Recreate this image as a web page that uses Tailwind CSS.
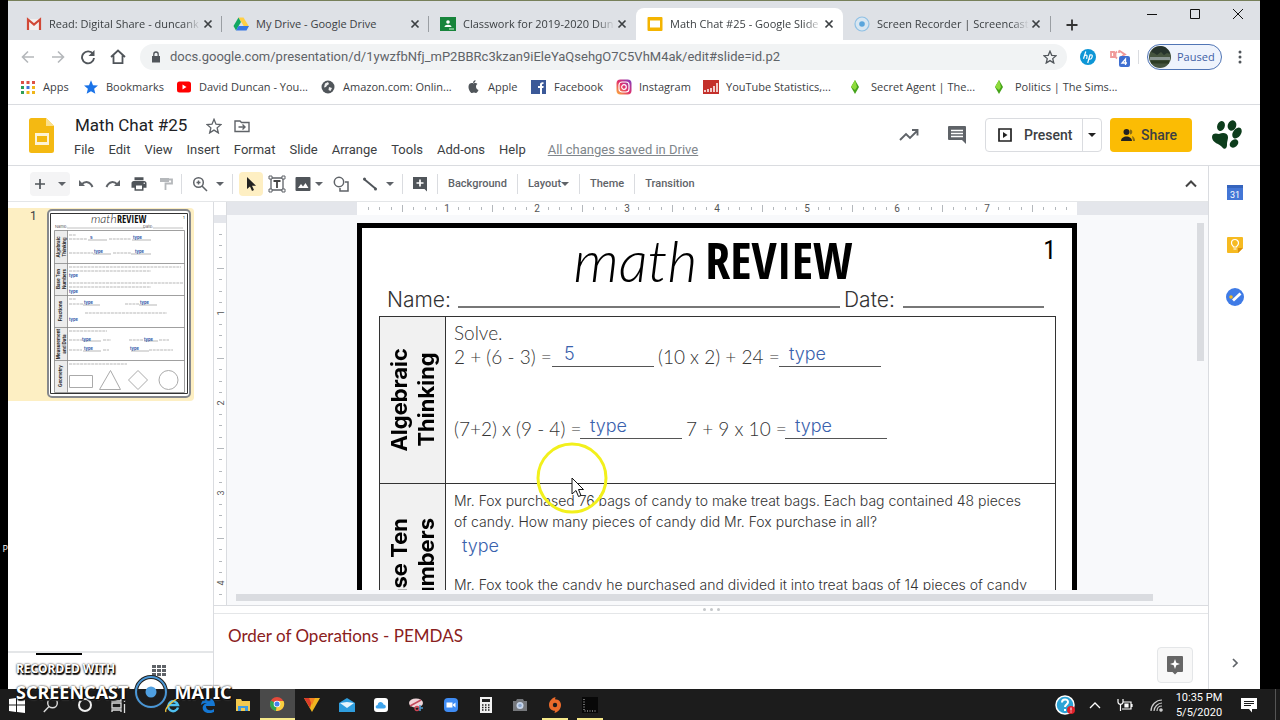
<!DOCTYPE html>
<html lang="en">
<head>
    <meta charset="UTF-8">
    <meta name="viewport" content="width=device-width, initial-scale=1.0">
    <title>Math Chat #25 - Google Slides</title>
    <script src="https://cdn.jsdelivr.net/npm/@tailwindcss/browser@4"></script>
</head>
<body class="relative flex h-screen flex-col overflow-hidden bg-black font-['Open_Sans','Noto_Sans',sans-serif] text-[#3c4043]">

    <div class="flex min-h-0 flex-1">
        <!-- left screen edge -->
        <div class="flex w-2 shrink-0 items-end justify-end overflow-hidden pb-[134px] text-[9px] leading-3 text-white">P</div>

        <div class="flex min-w-0 flex-1 flex-col bg-white">

            <!-- Tab strip -->
            <div class="flex h-10 shrink-0 items-end border-t border-[#77805a] bg-[#dee1e6] pl-[7px] text-[11px]">
                <div class="flex h-8 w-[207px] items-center pl-[11px]">
                    <svg class="h-4 w-4 shrink-0" viewBox="0 0 16 16"><path d="M2 3h12v11H2z" fill="#f3efef"/><path d="M2 14V3.5l6 5 6-5V14" fill="none" stroke="#d14836" stroke-width="2.2"/></svg>
                    <span class="ml-[7px] w-[152px] whitespace-nowrap [mask-image:linear-gradient(to_right,black_88%,transparent)]">Read: Digital Share - duncank</span>
                    <button class="ml-px" aria-label="Close tab"><svg class="h-3 w-3" viewBox="0 0 12 12"><path d="M2.5 2.5l7 7M9.5 2.5l-7 7" stroke="#3c4043" stroke-width="1.7"/></svg></button>
                    <div class="ml-auto h-4 w-px bg-[#9a9ea3]"></div>
                </div>
                <div class="flex h-8 w-[207px] items-center pl-[11px]">
                    <svg class="h-4 w-4 shrink-0" viewBox="0 0 16 16"><path d="M5.5 1.5h5L16 10.5h-5z" fill="#ffcf44"/><path d="M5.5 1.5L8 6l-5 8.5L.5 10z" fill="#11a861"/><path d="M5.5 10H16l-2.5 4.5H3z" fill="#3777e3"/></svg>
                    <span class="ml-[7px] w-[152px] whitespace-nowrap">My Drive - Google Drive</span>
                    <button class="ml-px" aria-label="Close tab"><svg class="h-3 w-3" viewBox="0 0 12 12"><path d="M2.5 2.5l7 7M9.5 2.5l-7 7" stroke="#3c4043" stroke-width="1.7"/></svg></button>
                    <div class="ml-auto h-4 w-px bg-[#9a9ea3]"></div>
                </div>
                <div class="flex h-8 w-[207px] items-center pl-[11px]">
                    <svg class="h-4 w-4 shrink-0" viewBox="0 0 16 16"><path d="M0 1h16v14H0z" fill="#17843b"/><circle cx="8" cy="6" r="1.8" fill="#fff"/><path d="M4.5 11c0-3 7-3 7 0z" fill="#fff"/><path d="M9 13h5" stroke="#8fd0a0" stroke-width="1.5"/></svg>
                    <span class="ml-[7px] w-[152px] whitespace-nowrap [mask-image:linear-gradient(to_right,black_88%,transparent)]">Classwork for 2019-2020 Dun</span>
                    <button class="ml-px" aria-label="Close tab"><svg class="h-3 w-3" viewBox="0 0 12 12"><path d="M2.5 2.5l7 7M9.5 2.5l-7 7" stroke="#3c4043" stroke-width="1.7"/></svg></button>
                </div>
                <div class="flex h-8 w-[207px] items-center rounded-t-lg bg-white pl-[11px]">
                    <svg class="h-4 w-4 shrink-0" viewBox="0 0 16 16"><rect x=".5" y="1" width="15" height="14" rx="1" fill="#f4b400"/><path d="M3 4.5h10v7H3z" fill="#fff"/></svg>
                    <span class="ml-[7px] w-[152px] whitespace-nowrap [mask-image:linear-gradient(to_right,black_88%,transparent)]">Math Chat #25 - Google Slide</span>
                    <button class="ml-px" aria-label="Close tab"><svg class="h-3 w-3" viewBox="0 0 12 12"><path d="M2.5 2.5l7 7M9.5 2.5l-7 7" stroke="#3c4043" stroke-width="1.7"/></svg></button>
                </div>
                <div class="flex h-8 w-[207px] items-center pl-[11px]">
                    <svg class="h-4 w-4 shrink-0" viewBox="0 0 16 16"><circle cx="8" cy="8" r="7" fill="#d8e6f1" stroke="#8fc0e4" stroke-width="1.2"/><circle cx="8" cy="8" r="2.8" fill="#5aa5dc"/></svg>
                    <span class="ml-[7px] w-[152px] whitespace-nowrap [mask-image:linear-gradient(to_right,black_88%,transparent)]">Screen Recorder | Screencast</span>
                    <button class="ml-px" aria-label="Close tab"><svg class="h-3 w-3" viewBox="0 0 12 12"><path d="M2.5 2.5l7 7M9.5 2.5l-7 7" stroke="#3c4043" stroke-width="1.7"/></svg></button>
                </div>
                <div class="mb-2 h-4 w-px bg-[#9a9ea3]"></div>
                <button class="mb-2 ml-3.5" aria-label="New tab"><svg class="h-3.5 w-3.5" viewBox="0 0 14 14"><path d="M7 1.5v11M1.500 7h11" stroke="#333" stroke-width="1.8"/></svg></button>
                <div class="mr-4 mb-5 ml-auto flex gap-[31px]">
                    <button aria-label="Minimize"><svg class="h-3 w-3" viewBox="0 0 12 12"><path d="M1 6.500h10" stroke="#111"/></svg></button>
                    <button aria-label="Maximize"><svg class="h-3 w-3" viewBox="0 0 12 12"><path d="M1.500 1.500h9v9h-9z" fill="none" stroke="#111"/></svg></button>
                    <button aria-label="Close"><svg class="h-3 w-3" viewBox="0 0 12 12"><path d="M1 1l10 10M11 1L1 11" stroke="#111"/></svg></button>
                </div>
            </div>

            <!-- Address bar -->
            <div class="flex h-[34px] shrink-0 items-center pl-3">
                <button class="mr-3.5" aria-label="Back"><svg class="h-4 w-4" viewBox="0 0 16 16"><path d="M14 8H2.500M8 2.500L2.500 8 8 13.500" fill="none" stroke="#b5b8bb" stroke-width="1.6"/></svg></button>
                <button class="mr-3.5" aria-label="Forward"><svg class="h-4 w-4" viewBox="0 0 16 16"><path d="M2 8h11.500M8 2.500L13.500 8 8 13.500" fill="none" stroke="#b5b8bb" stroke-width="1.6"/></svg></button>
                <button class="mr-3.5" aria-label="Reload"><svg class="h-4 w-4" viewBox="0 0 16 16"><path d="M13 5A6 6 0 1 0 14 9" fill="none" stroke="#50555a" stroke-width="1.9"/><path d="M14.500 1v6h-6z" fill="#50555a"/></svg></button>
                <button class="mr-3.5" aria-label="Home"><svg class="h-4 w-4" viewBox="0 0 16 16"><path d="M1 8l7-6.500L15 8M3.500 6.500v7.700h9V6.500" fill="none" stroke="#50555a" stroke-width="1.8"/></svg></button>
                <div class="flex h-[26px] min-w-0 flex-1 items-center rounded-full bg-[#f1f3f4] pr-2.5 pl-2.5">
                    <svg class="h-3 w-3" viewBox="0 0 12 12"><path d="M2 5h8v6.500H2z" fill="#50555a"/><path d="M3.800 5V3.200a2.200 2.200 0 0 1 4.400 0V5" fill="none" stroke="#50555a" stroke-width="1.3"/></svg>
                    <input type="text" aria-label="Address" value="docs.google.com/presentation/d/1ywzfbNfj_mP2BBRc3kzan9iEleYaQsehgO7C5VhM4ak/edit#slide=id.p2" class="ml-2 min-w-0 flex-1 bg-transparent font-[Roboto,sans-serif] text-[13px] text-[#5f6368] outline-none">
                    <button aria-label="Bookmark this page"><svg class="h-3.5 w-3.5" viewBox="0 0 24 24"><path d="M12 2l3 7.200 7.500.6-5.800 5 1.800 7.500L12 18.200l-6.500 4.100 1.800-7.500-5.800-5 7.500-.6z" fill="none" stroke="#50555a" stroke-width="2.2"/></svg></button>
                </div>
                <button class="ml-[13px]" aria-label="HP extension"><svg class="h-4 w-4" viewBox="0 0 16 16"><circle cx="8" cy="8" r="8" fill="#0d96d6"/><path d="M5.800 2.500L3.500 9.800M4.700 6.500c2.500-1.200 2.800.2 1.900 3.300M10 6l-2.300 8M9.500 6c3.200-.5 3.200.3 2.300 2.800-.3 1-.7 1.500-2.700 1.300" fill="none" stroke="#fff" stroke-width="1.2"/></svg></button>
                <button class="ml-3.5 flex" aria-label="Recorder extension"><svg class="h-5 w-5" viewBox="0 0 20 20"><path d="M1 5h3v5H1zM7 4.500L5.500 6v4L7 11.500M9 3.500l6 4-3 1.500M9 3.500V6" fill="none" stroke="#f09a9a" stroke-width="1.8"/><rect x="9" y="9" width="11" height="11" rx="2" fill="#3f6fd1"/><path d="M15.500 18v-6L12 16h5" fill="none" stroke="#fff" stroke-width="1.3"/></svg></button>
                <div class="ml-2 h-3.5 w-px bg-[#dadce0]"></div>
                <button class="ml-2 flex h-[26px] w-[75px] items-center rounded-full border border-[#5075b5] bg-[#eef3fc] pl-px text-[11px] text-[#3f60a5]">
                    <svg class="mr-1.5 h-[22px] w-[22px] shrink-0" viewBox="0 0 22 22"><circle cx="11" cy="11" r="11" fill="#45543f"/><path d="M2 6l2-3 3-2 5-1 4 1 4 4 1 3-3-1-3 2-3-3-4 3-3-2z" fill="#26332c"/><path d="M1 11h20v3H1z" fill="#8a9693"/><path d="M2 16h18" stroke="#2c3b24" stroke-width="3"/></svg>
                    Paused
                </button>
                <button class="mr-3 ml-2.5" aria-label="Menu"><svg class="h-4 w-4" viewBox="0 0 16 16" fill="#50555a"><circle cx="8" cy="3" r="1.5"/><circle cx="8" cy="8" r="1.5"/><circle cx="8" cy="13" r="1.5"/></svg></button>
            </div>

            <!-- Bookmarks bar -->
            <div class="flex h-[31px] shrink-0 items-center border-b border-[#dadce0] pb-1 pl-3 text-[11px] whitespace-nowrap">
                <a href="#" class="flex w-[63px] shrink-0 items-center gap-[7px]"><svg class="h-4 w-4" viewBox="0 0 16 16"><path d="M1 2h3v3H1zM6.500 2h3v3h-3zM12 2h3v3h-3z" fill="#dd5246"/><path d="M1 7h3v3H1z" fill="#2f9e58"/><path d="M6.500 7h3v3h-3z" fill="#4173d8"/><path d="M12 7h3v3h-3z" fill="#f0b61a"/><path d="M1 12h3v3H1z" fill="#2f9e58"/><path d="M6.500 12h3v3h-3zM12 12h3v3h-3z" fill="#f0b61a"/></svg>Apps</a>
                <a href="#" class="flex w-[93px] shrink-0 items-center gap-[7px]"><svg class="h-4 w-4" viewBox="0 0 24 24"><path d="M12 2l3 7.200 7.500.6-5.800 5 1.800 7.500L12 18.200l-6.500 4.100 1.800-7.500-5.800-5 7.500-.6z" fill="#1a73e8"/></svg>Bookmarks</a>
                <a href="#" class="flex w-[144px] shrink-0 items-center gap-[7px]"><svg class="h-4 w-4" viewBox="0 0 16 16"><rect x="1" y="2.500" width="14" height="11" rx="2.500" fill="#f00"/><path d="M6.500 5.500v5l4-2.500z" fill="#fff"/></svg>David Duncan - You...</a>
                <a href="#" class="flex w-[145px] shrink-0 items-center gap-[7px]"><svg class="h-4 w-4" viewBox="0 0 16 16"><circle cx="8" cy="8" r="6.500" fill="#50555a"/><path d="M5 4.500l3-1.500 1 2-2 1.500-1 1.500-2 .5M9 8l3 1-1.500 3L8.500 11z" fill="#eee"/></svg>Amazon.com: Onlin...</a>
                <a href="#" class="flex w-[66px] shrink-0 items-center gap-[7px]"><svg class="h-4 w-4" viewBox="0 0 16 16" fill="#50555a"><path d="M11 7.500c0-1.500 1-2.200 1.500-2.500-1-1.300-2.500-1.300-4-.6-1.500-.8-5-.6-5 3.300 0 3 2 6.300 3.500 6.300.8 0 1.200-.5 2-.5s1.200.5 2 .5 2-1.700 2.500-3C12 10.500 11 9.500 11 7.500zM8 4c0-1.500 1-2.700 2.500-3C10.600 2.700 9.500 4 8 4z"/></svg>Apple</a>
                <a href="#" class="flex w-[85px] shrink-0 items-center gap-[7px]"><svg class="h-4 w-4" viewBox="0 0 16 16"><path d="M0 1h15v14H0z" fill="#3b5998"/><path d="M9 15V9H7V7h2V5.500C9 4 10 3 12.500 3.300V5c-1.500 0-1.500.3-1.500 2h1.700l-.3 2H11v6z" fill="#fff"/></svg>Facebook</a>
                <a href="#" class="flex w-[87px] shrink-0 items-center gap-[7px]"><svg class="h-4 w-4" viewBox="0 0 16 16"><defs><linearGradient id="ig" x1="0" y1="1" x2="1" y2="0"><stop offset="0" stop-color="#fdb63b"/><stop offset=".5" stop-color="#e1306c"/><stop offset="1" stop-color="#7a3fc4"/></linearGradient></defs><rect x=".5" y=".5" width="15" height="15" rx="4" fill="url(#ig)"/><rect x="3" y="3" width="10" height="10" rx="3" fill="none" stroke="#fff" stroke-width="1.2"/><circle cx="8" cy="8" r="2.300" fill="none" stroke="#fff" stroke-width="1.2"/></svg>Instagram</a>
                <a href="#" class="flex w-[145px] shrink-0 items-center gap-[7px]"><svg class="h-4 w-4" viewBox="0 0 16 16"><path d="M0 1h16v14H0z" fill="#c4302b"/><path d="M2 11v2M5 10v3M8 9v4M11 7v6M14 4v9" stroke="#fff" stroke-width="1.5"/></svg>YouTube Statistics,...</a>
                <a href="#" class="flex w-[144px] shrink-0 items-center gap-[7px]"><svg class="h-4 w-4" viewBox="0 0 16 16"><path d="M7 1l4 7-4 7-4-7z" fill="#45a31a"/><path d="M7 1l2 7-2 3-4-3z" fill="#8edb3c"/></svg>Secret Agent | The...</a>
                <a href="#" class="flex shrink-0 items-center gap-[7px]"><svg class="h-4 w-4" viewBox="0 0 16 16"><path d="M7 1l4 7-4 7-4-7z" fill="#45a31a"/><path d="M7 1l2 7-2 3-4-3z" fill="#8edb3c"/></svg>Politics | The Sims...</a>
            </div>

            <!-- Document header -->
            <div class="flex h-[61px] shrink-0 items-center border-b border-[#dadce0] font-[Roboto,sans-serif]">
                <svg class="ml-[21px] h-[35px] w-[26px] shrink-0" viewBox="0 0 26 35"><path d="M2.500 0H17l8 8v24.500a2.500 2.500 0 0 1-2.500 2.500h-20A2.500 2.500 0 0 1 0 32.500v-30A2.500 2.500 0 0 1 2.500 0z" fill="#f4b912"/><path d="M17 0l8 8h-8z" fill="#fbe08d"/><path d="M6 15h14v12H6z" fill="#fdf3d6"/><path d="M8 18h10v6H8z" fill="#f4b912"/></svg>
                <div class="ml-[19px] pt-1.5">
                    <div class="flex h-6 items-center">
                        <input type="text" aria-label="Document title" value="Math Chat #25" class="w-[122px] bg-transparent pl-px text-[17px] text-[#202124] outline-none">
                        <button class="ml-2.5" aria-label="Star"><svg class="h-4 w-4" viewBox="0 0 24 24"><path d="M12 2l3 7.200 7.500.6-5.800 5 1.800 7.500L12 18.200l-6.500 4.100 1.800-7.500-5.800-5 7.500-.6z" fill="none" stroke="#5f6368" stroke-width="2"/></svg></button>
                        <button class="ml-3" aria-label="Move to folder"><svg class="h-4 w-4" viewBox="0 0 16 16"><path d="M1 3h5l1.500 1.500H15V13.500H1z" fill="none" stroke="#5f6368" stroke-width="1.4"/><path d="M4.500 9h6M8.500 6.500L11 9l-2.500 2.500" fill="none" stroke="#5f6368" stroke-width="1.4"/></svg></button>
                    </div>
                    <div class="flex h-6 items-center gap-3.5 text-[13px] whitespace-nowrap text-[#3c4043]">
                        <button>File</button>
                        <button>Edit</button>
                        <button>View</button>
                        <button>Insert</button>
                        <button>Format</button>
                        <button>Slide</button>
                        <button>Arrange</button>
                        <button>Tools</button>
                        <button>Add-ons</button>
                        <button>Help</button>
                        <a href="#" class="ml-2 text-[#80868b] underline">All changes saved in Drive</a>
                    </div>
                </div>
                <div class="mr-[18px] ml-auto flex items-center font-medium">
                    <button class="mr-7" aria-label="Activity"><svg class="h-5 w-5" viewBox="0 0 20 20"><path d="M1 15l6-6 4 4 7-7M13 5h5.500v5.500" fill="none" stroke="#5f6368" stroke-width="1.9"/></svg></button>
                    <button class="mr-[18px]" aria-label="Comments"><svg class="h-5 w-5" viewBox="0 0 20 20"><path d="M2 1h16a1 1 0 0 1 1 1v17l-4-4H2a1 1 0 0 1-1-1V2a1 1 0 0 1 1-1z" fill="#5f6368"/><path d="M4 5.500h12M4 8.500h12M4 11.500h12" stroke="#fff" stroke-width="1.5"/></svg></button>
                    <div class="flex h-[34px] rounded border border-[#dadce0] text-sm text-[#3c4043]">
                        <button class="flex w-24 items-center gap-3 pl-3"><svg class="h-3.5 w-3.5" viewBox="0 0 14 14"><path d="M1 1h12v12H1z" fill="none" stroke="#222" stroke-width="1.7"/><path d="M5 4v6l4.500-3z" fill="#222"/></svg>Present</button>
                        <button class="flex w-[19px] items-center justify-center border-l border-[#dadce0]" aria-label="Present options"><svg class="h-2 w-2" viewBox="0 0 8 8"><path d="M0 2h8L4 6z" fill="#222"/></svg></button>
                    </div>
                    <button class="ml-2 flex h-[34px] w-[82px] items-center gap-1.5 rounded bg-[#fbbc04] pl-[11px] text-sm"><svg class="h-3.5 w-3.5" viewBox="0 0 14 14"><circle cx="5.500" cy="4" r="3" fill="#222"/><path d="M0 13c0-6 11-6 11 0z" fill="#222"/><path d="M9 1.500c3 0 3 5 0 5M11 8c2 1 3 2.500 3 5h-2" fill="#8a6c14"/></svg>Share</button>
                    <svg class="ml-5 h-[30px] w-[30px]" viewBox="0 0 30 30" fill="#0d3d1c"><path d="M0 17c0-4 4-4 7-3 4-2 9-1 9 3 0 3-1 4-1 8 0 4-3 5-5 2-2-3-10-4-10-10z"/><ellipse cx="9" cy="6" rx="3.800" ry="5" transform="rotate(20 9 6)"/><ellipse cx="20" cy="5.500" rx="4.200" ry="5.300" transform="rotate(20 20 5.500)"/><ellipse cx="25" cy="13" rx="4" ry="6" transform="rotate(35 25 13)"/><ellipse cx="22" cy="23.500" rx="3.600" ry="4.800" transform="rotate(50 22 23.500)"/></svg>
                </div>
            </div>

            <div class="flex min-h-0 flex-1">
                <div class="flex min-w-0 flex-1 flex-col">

                    <!-- Toolbar -->
                    <div class="flex h-9 shrink-0 items-center border-b border-[#e4e6e8] pr-[10px] pl-[22px] font-[Roboto,sans-serif] text-[11px] font-medium text-[#5f6368]">
                        <button class="flex h-6 w-10 items-center justify-center gap-3 rounded bg-[#f4f4f5]" aria-label="New slide"><svg class="h-3 w-3" viewBox="0 0 12 12"><path d="M6 1v10M1 6h10" stroke="#50555a" stroke-width="1.7"/></svg><svg class="h-2 w-2" viewBox="0 0 8 8"><path d="M0 2h8L4 6z" fill="#5f6368"/></svg></button>
                        <button class="ml-0.5 flex w-[27px] justify-center" aria-label="Undo"><svg class="h-4 w-4" viewBox="0 0 16 16"><path d="M1 4v6h6z" fill="#5f6368"/><path d="M3.500 8.500C7 5 12 5 14.500 11" fill="none" stroke="#5f6368" stroke-width="2"/></svg></button>
                        <button class="flex w-[27px] justify-center" aria-label="Redo"><svg class="h-4 w-4" viewBox="0 0 16 16"><path d="M15 4v6H9z" fill="#5f6368"/><path d="M12.500 8.500C9 5 4 5 1.500 11" fill="none" stroke="#5f6368" stroke-width="2"/></svg></button>
                        <button class="flex w-[26px] justify-center" aria-label="Print"><svg class="h-[18px] w-[18px]" viewBox="0 0 24 24" fill="#50555a"><path d="M19 8H5c-1.660 0-3 1.340-3 3v6h4v4h12v-4h4v-6c0-1.660-1.340-3-3-3zm-3 11H8v-5h8v5zm3-7c-.55 0-1-.45-1-1s.45-1 1-1 1 .45 1 1-.45 1-1 1zm-1-9H6v4h12V3z"/></svg></button>
                        <button class="flex w-[27px] justify-center" aria-label="Paint format"><svg class="h-4 w-4" viewBox="0 0 16 16"><path d="M2 2h9v4H2z" fill="#b5b8bb"/><path d="M11 3.500h3v4H7.500V14" fill="none" stroke="#b5b8bb" stroke-width="1.8"/></svg></button>
                        <div class="mx-0.5 h-5 w-px bg-[#dadce0]"></div>
                        <button class="flex w-12 items-center justify-center gap-2" aria-label="Zoom"><svg class="h-4 w-4" viewBox="0 0 16 16"><circle cx="6.500" cy="6.500" r="4.800" fill="none" stroke="#5f6368" stroke-width="1.5"/><path d="M10 10l5 5M6.500 4.500v4M4.500 6.500h4" stroke="#5f6368" stroke-width="1.5"/></svg><svg class="h-2 w-2" viewBox="0 0 8 8"><path d="M0 2h8L4 6z" fill="#5f6368"/></svg></button>
                        <div class="h-5 w-px bg-[#dadce0]"></div>
                        <button class="ml-1.5 flex h-6 w-6 items-center justify-center rounded-sm bg-[#feefc3]" aria-label="Select"><svg class="h-4 w-4" viewBox="0 0 16 16"><path d="M4 1v12l3-2.500L9 15l2-1-2-4.300h4z" fill="#222"/></svg></button>
                        <button class="flex w-7 justify-center" aria-label="Text box"><svg class="h-[18px] w-[18px]" viewBox="0 0 18 18"><path d="M3 3h12v12H3z" fill="none" stroke="#5f6368" stroke-width="1.3"/><path d="M1 1h3v3H1zM14 1h3v3h-3zM1 14h3v3H1zM14 14h3v3h-3z" fill="#fff" stroke="#5f6368"/><path d="M5.500 6h7M9 6v7" stroke="#444" stroke-width="1.8"/></svg></button>
                        <button class="flex w-9 items-center justify-center gap-1" aria-label="Insert image"><svg class="h-4 w-4" viewBox="0 0 16 16"><rect x=".5" y="1" width="15" height="14" rx="1" fill="#50555a"/><path d="M3 12l3-4 2 2.500L10.500 7l3 5z" fill="#fff"/></svg><svg class="h-2 w-2" viewBox="0 0 8 8"><path d="M0 2h8L4 6z" fill="#5f6368"/></svg></button>
                        <button class="flex w-7 justify-center" aria-label="Shape"><svg class="h-4 w-4" viewBox="0 0 16 16" fill="none" stroke="#5f6368" stroke-width="1.5"><circle cx="6" cy="6" r="4.700"/><path d="M12 6h3v9H7v-3"/></svg></button>
                        <button class="flex w-[45px] items-center justify-center gap-2" aria-label="Line"><svg class="h-4 w-4" viewBox="0 0 16 16"><path d="M2 3l12 10" stroke="#50555a" stroke-width="1.9"/><circle cx="2.500" cy="3" r="1.5" fill="#50555a"/><circle cx="13.500" cy="13" r="1.5" fill="#50555a"/></svg><svg class="h-2 w-2" viewBox="0 0 8 8"><path d="M0 2h8L4 6z" fill="#5f6368"/></svg></button>
                        <div class="mx-0.5 h-5 w-px bg-[#dadce0]"></div>
                        <button class="flex w-[30px] justify-center" aria-label="Add comment"><svg class="h-4 w-4" viewBox="0 0 16 16"><path d="M1 1h14v14.500L12.500 13H1z" fill="#50555a"/><path d="M8 3.500v7M4.500 7h7" stroke="#fff" stroke-width="1.7"/></svg></button>
                        <div class="ml-0.5 h-5 w-px bg-[#dadce0]"></div>
                        <button class="px-2.5 leading-5">Background</button>
                        <div class="h-5 w-px bg-[#dadce0]"></div>
                        <button class="flex items-center px-2.5 leading-5">Layout<svg class="h-2 w-2" viewBox="0 0 8 8"><path d="M0 2h8L4 6z" fill="#5f6368"/></svg></button>
                        <div class="h-5 w-px bg-[#dadce0]"></div>
                        <button class="px-2.5 leading-5">Theme</button>
                        <div class="h-5 w-px bg-[#dadce0]"></div>
                        <button class="px-2.5 leading-5">Transition</button>
                        <button class="ml-auto" aria-label="Hide the menus"><svg class="h-3.5 w-3.5" viewBox="0 0 14 14"><path d="M2 9.500l5-5 5 5" fill="none" stroke="#444" stroke-width="2"/></svg></button>
                    </div>

                    <div class="flex min-h-0 flex-1">

                        <!-- Filmstrip -->
                        <div class="flex w-[206px] shrink-0 flex-col border-r border-[#dadce0]">
                            <div class="mt-1.5 flex h-[193px] w-[186px] rounded-r bg-[#fdefc3]">
                                <span class="w-[39px] pl-[22px] font-[Roboto,sans-serif] text-xs leading-4">1</span>
                                <svg class="mt-px h-[190px] w-36 shrink-0" viewBox="0 0 144 190" fill="none" font-family="Inter, sans-serif">
                                    <rect x="1" y="1" width="142" height="187" rx="4" fill="#fff" stroke="#86888c" stroke-width="2"/>
                                    <path d="M3.500 4.500h137v180h-137z" stroke="#333"/>
                                    <text x="44" y="14" font-family="Lato" font-style="italic" font-weight="300" font-size="12" fill="#222">math</text>
                                    <text x="70" y="14" font-size="10" font-weight="700" fill="#111" font-family="Open Sans Condensed, Roboto Condensed, Liberation Sans">REVIEW</text>
                                    <text x="136" y="10" font-size="4" fill="#222">1</text>
                                    <path d="M20 19h78M106 19h30" stroke="#999" stroke-width=".6"/>
                                    <g font-size="4" fill="#555"><text x="8" y="19">Name:</text><text x="96" y="19">Date:</text></g>
                                    <path d="M7.500 21.500h13v162h-13z" fill="#ececec"/>
                                    <path d="M7.500 21.500h130v162h-130zM20.500 21v163M7.500 54.500h130M7.500 86.500h130M7.500 118.500h130M7.500 151.500h130" stroke="#888" stroke-width=".8"/>
                                    <g font-size="4.500" font-weight="700" fill="#222" text-anchor="middle">
                                        <text transform="translate(13 38) rotate(-90)">Algebraic</text><text transform="translate(18.500 38) rotate(-90)">Thinking</text>
                                        <text transform="translate(13 70) rotate(-90)">Base Ten</text><text transform="translate(18.500 70) rotate(-90)">Numbers</text>
                                        <text transform="translate(15 102) rotate(-90)">Fractions</text>
                                        <text transform="translate(13 135) rotate(-90)">Measurement</text><text transform="translate(18.500 135) rotate(-90)">and Data</text>
                                        <text transform="translate(15 167) rotate(-90)">Geometry</text>
                                    </g>
                                    <path d="M22 26h7M22 30h18M62 30h22M22 44h24M66 44h18M22 58h112M22 62h82M22 74h114M22 78h82M22 90h7M22 95h14M78 95h14M38 104h82M22 122h38M22 131h13M56 131h8M82 131h14M112 131h10M22 141h13M56 141h6M102 141h24M22 155h58" stroke="#d0d0d0" stroke-width="1.6" stroke-dasharray="3 .7"/>
                                    <path d="M41 31h19M85 31h19M46 45h18M84 45h20M36 96h17M92 96h18M36 132h18M97 132h14M36 142h18M84 142h18" stroke="#888" stroke-width=".6"/>
                                    <g font-size="4" font-weight="700" fill="#2f56a8">
                                        <text x="43" y="30">5</text><text x="86" y="30">type</text><text x="47" y="44">type</text><text x="88" y="44">type</text>
                                        <text x="22" y="68">type</text><text x="22" y="84">type</text><text x="37" y="95">type</text><text x="93" y="95">type</text>
                                        <text x="22" y="112">type</text><text x="35" y="132">type</text><text x="97" y="132">type</text><text x="37" y="141">type</text><text x="83" y="141">type</text>
                                    </g>
                                    <path d="M22.500 166.500h23v12h-23zM52.500 180.500l11-19 10 19zM81.500 171l9.500-9.500 9.500 9.500-9.500 9.500z" stroke="#aaa"/>
                                    <circle cx="121.500" cy="171" r="9.500" stroke="#aaa"/>
                                </svg>
                            </div>
                            <div class="mt-auto flex h-[38px] items-start border-t-2 border-[#e4e6e8]">
                                <div class="ml-7 h-0.5 w-[46px] bg-black"></div>
                                <button class="mt-[11px] ml-[70px]" aria-label="Grid view"><svg class="h-3.5 w-3.5" viewBox="0 0 14 14" fill="#5f6368"><path d="M0 1h4v3H0zM5 1h4v3H5zM10 1h4v3h-4zM0 5h4v3H0zM5 5h4v3H5zM10 5h4v3h-4zM0 9h4v3H0zM5 9h4v3H5zM10 9h4v3h-4z"/></svg></button>
                            </div>
                        </div>

                        <div class="flex min-w-0 flex-1 flex-col">
                            <div class="flex min-h-0 flex-1 border-b border-[#dadce0]">

                                <!-- Vertical ruler -->
                                <svg class="h-full w-[13px] shrink-0 border-r border-[#dadce0]" font-family="Roboto" font-size="9" fill="#555" text-anchor="middle">
                                    <defs><pattern id="vticks" x="0" y="21" width="13" height="90" patternUnits="userSpaceOnUse"><path d="M5 11.500h3M5 22.500h3M5 34.500h3M3 45.500h7M5 56.500h3M5 68.500h3M5 79.500h3" stroke="#b4b8bc"/></pattern></defs>
                                    <rect y="13" width="13" height="8" fill="#e4e6eb"/>
                                    <rect y="22" width="13" height="400" fill="url(#vticks)"/>
                                    <text transform="translate(10 111) rotate(-90)">1</text>
                                    <text transform="translate(10 201) rotate(-90)">2</text>
                                    <text transform="translate(10 291) rotate(-90)">3</text>
                                    <text transform="translate(10 381) rotate(-90)">4</text>
                                </svg>

                                <div class="flex min-w-0 flex-1 flex-col bg-[#f8f9fb]">
                                    <!-- Horizontal ruler -->
                                    <div class="flex h-[13px] shrink-0 bg-[#e4e6eb] pl-[130px]">
                                        <svg class="h-[13px] w-[720px] bg-white" viewBox="0 0 720 13" font-family="Roboto" font-size="10" fill="#555" text-anchor="middle">
                                            <defs><pattern id="hticks" width="90" height="13" patternUnits="userSpaceOnUse"><path d="M11.500 5v3M22.500 5v3M34.500 5v3M45.500 3v7M56.500 5v3M68.500 5v3M79.500 5v3" stroke="#b4b8bc"/></pattern></defs>
                                            <rect width="720" height="13" fill="url(#hticks)"/>
                                            <text x="90" y="10">1</text><text x="180" y="10">2</text><text x="270" y="10">3</text><text x="360" y="10">4</text><text x="450" y="10">5</text><text x="540" y="10">6</text><text x="630" y="10">7</text>
                                        </svg>
                                    </div>

                                    <div class="flex min-h-0 flex-1 pt-2 pr-1">
                                        <!-- Slide -->
                                        <div class="ml-[130px] w-[720px] shrink-0 overflow-hidden border-x-[5px] border-t-[5px] border-black bg-white pr-4 pl-[17px] text-[#333]">
                                            <div class="flex h-[60px] items-center pt-1 text-black">
                                                <div class="flex flex-1 items-center justify-center gap-2 pl-1">
                                                    <span class="font-[Lato,sans-serif] text-[58px] leading-none font-light italic">math</span>
                                                    <span class="font-['Open_Sans_Condensed','Roboto_Condensed','Liberation_Sans',sans-serif] text-[50px] leading-none font-bold">REVIEW</span>
                                                </div>
                                                <span class="mb-5 font-['Roboto_Condensed',Roboto,sans-serif] text-[26px] leading-none">1</span>
                                            </div>
                                            <div class="flex h-6 items-end gap-1 pr-3 pl-2 font-[Inter,sans-serif] text-[21px] leading-6 font-light">
                                                <span class="w-[67px]">Name:</span>
                                                <span class="mb-1 flex-1 border-b-2 border-[#777]"></span>
                                                <span class="w-[55px]">Date:</span>
                                                <span class="mb-1 w-[141px] border-b-2 border-[#777]"></span>
                                            </div>
                                            <div class="mt-1 grid grid-cols-[66px_minmax(0,1fr)] border border-[#333] font-[Lato,sans-serif] text-[19px] font-light">
                                                <div class="flex h-[167px] items-center justify-center border-r border-b border-[#333] bg-[#f1f1f1]">
                                                    <div class="rotate-180 text-center font-[Inter,sans-serif] text-[22px] leading-[27px] font-bold text-black [writing-mode:vertical-rl]">Algebraic<br>Thinking</div>
                                                </div>
                                                <div class="border-b border-[#333] pt-1 pl-2">
                                                    <p class="leading-6">Solve.</p>
                                                    <div class="flex h-[22px] items-end gap-1 leading-5">
                                                        <span class="w-[94px] whitespace-nowrap">2 + (6 - 3) =</span>
                                                        <span class="w-[102px] border-b border-[#555] pl-3 font-[Inter,sans-serif] text-lg leading-6 text-[#3a62ad]">5</span>
                                                        <span class="w-[117px] whitespace-nowrap">(10 x 2) + 24 =</span>
                                                        <span class="w-[102px] border-b border-[#555] pl-2.5 font-[Inter,sans-serif] text-lg leading-6 text-[#3a62ad]">type</span>
                                                    </div>
                                                    <div class="mt-[50px] flex h-[22px] items-end gap-1 leading-5">
                                                        <span class="w-[122px] whitespace-nowrap">(7+2) x (9 - 4) =</span>
                                                        <span class="w-[102px] border-b border-[#555] pl-2.5 font-[Inter,sans-serif] text-lg leading-6 text-[#3a62ad]">type</span>
                                                        <span class="w-[95px] whitespace-nowrap">7 + 9 x 10 =</span>
                                                        <span class="w-[102px] border-b border-[#555] pl-2.5 font-[Inter,sans-serif] text-lg leading-6 text-[#3a62ad]">type</span>
                                                    </div>
                                                </div>
                                                <div class="flex h-[167px] items-center justify-center border-r border-[#333] bg-[#f1f1f1]">
                                                    <div class="rotate-180 text-center font-[Inter,sans-serif] text-[22px] leading-[27px] font-bold text-black [writing-mode:vertical-rl]">Base Ten<br>Numbers</div>
                                                </div>
                                                <div class="pt-1.5 pl-2 font-[Inter,sans-serif] text-sm leading-[21px] whitespace-nowrap">
                                                    <p>Mr. Fox purchased 76 bags of candy to make treat bags. Each bag contained 48 pieces</p>
                                                    <p>of candy. How many pieces of candy did Mr. Fox purchase in all?</p>
                                                    <p class="mt-0.5 pl-2 text-lg leading-6 text-[#3a62ad]">type</p>
                                                    <p class="mt-4">Mr. Fox took the candy he purchased and divided it into treat bags of 14 pieces of candy</p>
                                                </div>
                                            </div>
                                        </div>
                                        <div class="ml-auto h-[138px] w-[7px] bg-[#dadce0]"></div>
                                    </div>

                                    <!-- Horizontal scrollbar -->
                                    <div class="flex h-[15px] shrink-0 items-center bg-[#f8f9fb] pr-[55px] pl-[9px]">
                                        <div class="h-[7px] flex-1 bg-[#dadce0]"></div>
                                    </div>
                                </div>
                            </div>

                            <!-- Splitter and speaker notes -->
                            <div class="flex h-2 shrink-0 items-center justify-center gap-1 border-b border-[#e4e6e8]">
                                <i class="h-[3px] w-[3px] rounded-full bg-[#c4c7ca]"></i>
                                <i class="h-[3px] w-[3px] rounded-full bg-[#c4c7ca]"></i>
                                <i class="h-[3px] w-[3px] rounded-full bg-[#c4c7ca]"></i>
                            </div>
                            <div class="flex h-[75px] shrink-0 items-end pr-[15px] pb-1.5 pl-[14px]">
                                <textarea aria-label="Speaker notes" class="h-[59px] flex-1 resize-none bg-transparent font-[Lato,sans-serif] text-[17px] leading-6 text-[#8a2020] outline-none">Order of Operations - PEMDAS</textarea>
                                <button class="flex h-9 w-9 items-center justify-center rounded-sm border border-[#e4e6e8] bg-[#f8f8f8]" aria-label="Explore"><svg class="h-5 w-5" viewBox="0 0 20 20"><path d="M3 1h14a1 1 0 0 1 1 1v14a1 1 0 0 1-1 1h-4.500L10 19.500 7.500 17H3a1 1 0 0 1-1-1V2a1 1 0 0 1 1-1z" fill="#666"/><path d="M10 4l1.300 3.700L15 9l-3.700 1.300L10 14l-1.300-3.700L5 9l3.700-1.300z" fill="#fff"/></svg></button>
                            </div>
                        </div>
                    </div>
                </div>

                <!-- Side panel -->
                <div class="flex w-[52px] shrink-0 flex-col items-center border-l border-[#dadce0] pt-[18px] pb-[18px]">
                    <button aria-label="Calendar"><svg class="h-[18px] w-[18px]" viewBox="0 0 18 18"><path d="M1 2h16v14H1z" fill="#4376d6"/><path d="M1 1h16v3H1z" fill="#3564bd"/><text x="9" y="14" font-family="Roboto" font-size="9" text-anchor="middle" fill="#fff">31</text></svg></button>
                    <button class="mt-[34px]" aria-label="Keep"><svg class="h-[18px] w-[18px]" viewBox="0 0 18 18"><path d="M2 1h14a1 1 0 0 1 1 1v10l-5 5H2a1 1 0 0 1-1-1V2a1 1 0 0 1 1-1z" fill="#f6ba21"/><path d="M17 12l-5 5v-5z" fill="#dc8f0a"/><path d="M7.500 11c0-1-2-1.500-2-4a3.500 3.500 0 0 1 7 0c0 2.500-2 3-2 4zM7.500 13h3" fill="none" stroke="#fff" stroke-width="1.2"/></svg></button>
                    <button class="mt-[34px]" aria-label="Tasks"><svg class="h-[18px] w-[18px]" viewBox="0 0 18 18"><circle cx="9" cy="9" r="9" fill="#3f7be6"/><path d="M7 12.500l7.500-7" stroke="#fff" stroke-width="2.8"/><circle cx="5" cy="9" r="1.8" fill="#f6ba21"/></svg></button>
                    <button class="mt-auto" aria-label="Hide side panel"><svg class="h-4 w-4" viewBox="0 0 16 16"><path d="M6 4l4 4-4 4" fill="none" stroke="#5f6368" stroke-width="1.7"/></svg></button>
                </div>
            </div>
        </div>
        <div class="w-5 shrink-0"></div>
    </div>

    <!-- Windows taskbar -->
    <div class="flex h-[31px] shrink-0 items-center bg-[#1c1c1c] text-white">
        <div class="flex w-[136px] shrink-0 *:flex *:flex-1 *:justify-center">
            <button aria-label="Start"><svg class="h-4 w-4" viewBox="0 0 16 16" fill="#fff"><path d="M0 2l7-1v6.500H0zM8 .9L16 0v7.500H8zM0 8.500h7V15l-7-1zM8 8.500h8V16l-8-1z"/></svg></button>
            <button aria-label="Search"><svg class="h-4 w-4" viewBox="0 0 16 16" fill="none" stroke="#ddd" stroke-width="1.4"><circle cx="9.500" cy="6" r="4.800"/><path d="M6 9.500L.8 15"/></svg></button>
            <button aria-label="Cortana"><svg class="h-4 w-4" viewBox="0 0 16 16"><circle cx="8" cy="8" r="6" fill="none" stroke="#eee" stroke-width="2"/></svg></button>
            <button aria-label="Task view"><svg class="h-4 w-4" viewBox="0 0 16 16" fill="none" stroke="#ddd" stroke-width="1.3"><path d="M1 2v2h9V2M1 6h9v5H1zM1 15v-2h9v2M13.500 1v4M13.500 7v9"/></svg></button>
        </div>
        <div class="ml-5 flex h-full w-[451px] shrink-0 *:flex *:flex-1 *:items-center *:justify-center">
            <button aria-label="Internet Explorer"><svg class="h-4 w-4" viewBox="0 0 16 16" fill="none"><path d="M13 10.500A5 5 0 1 1 13 8H4" stroke="#4fc0f0" stroke-width="2.4"/><path d="M1 15C-1 12 9 1 15 2" stroke="#f0c43c" stroke-width="1.3"/></svg></button>
            <button aria-label="Edge"><svg class="h-4 w-4" viewBox="0 0 16 16"><path d="M1 8c1-9 14-10 14 1H6c0 5 5 5 8 3v3C8 18 1 15 3 9c1-2 3-3 4-3-3-.5-5 1-6 2z" fill="#1578d4"/></svg></button>
            <button aria-label="File Explorer"><svg class="h-4 w-4" viewBox="0 0 16 16"><path d="M1 2h5l1 2h8v10H1z" fill="#f3c94f"/><path d="M3 9h10v5h-3v-3H6v3H3z" fill="#3f9be0"/></svg></button>
            <button class="border-b-2 border-[#f6e98a] bg-[#4a4a4a]" aria-label="Chrome"><svg class="h-4 w-4" viewBox="0 0 16 16"><circle cx="8" cy="8" r="7" fill="#e5493a"/><path d="M8 8L1.900 4.500A7 7 0 0 0 7 14.900z" fill="#30a551"/><path d="M8 8l-1 6.900A7 7 0 0 0 14.500 5H8z" fill="#f9cf3f"/><circle cx="8" cy="8" r="3.300" fill="#fff"/><circle cx="8" cy="8" r="2.500" fill="#4581ea"/></svg></button>
            <button aria-label="Vectorworks"><svg class="h-4 w-4" viewBox="0 0 16 16"><path d="M0 1h16L8 15z" fill="#f0b51f"/><path d="M0 1h9l-3 10z" fill="#db3b2a"/><path d="M5 1h6L8 8z" fill="#f58220"/></svg></button>
            <button aria-label="Mail"><svg class="h-4 w-4" viewBox="0 0 16 16"><path d="M0 6l8-5 8 5v9H0z" fill="#2f9ddd"/><path d="M1 6l7 5 7-5-7-1z" fill="#e6f5fd"/></svg></button>
            <button aria-label="iCloud"><svg class="h-4 w-4" viewBox="0 0 16 16"><rect x="1" y="1" width="14" height="14" rx="3" fill="#fff"/><path d="M4 11.500c-2-.5-1.500-3.500.7-3.500 0-4 5.300-4 5.800-.5 3 0 3 4 .5 4z" fill="#3fa4ec"/></svg></button>
            <button aria-label="Snipping Tool"><svg class="h-4 w-4" viewBox="0 0 16 16" fill="none"><ellipse cx="8" cy="6" rx="7" ry="4.500" fill="#f0d6da"/><path d="M2 9l11-6" stroke="#c24a5c" stroke-width="1.5"/><circle cx="9" cy="11.500" r="2" stroke="#d04555" stroke-width="1.3"/><path d="M12 8v6M12 11h3" stroke="#4f9bd0" stroke-width="1.5"/></svg></button>
            <button aria-label="Zoom"><svg class="h-4 w-4" viewBox="0 0 16 16"><rect x="1" y="1" width="14" height="14" rx="4" fill="#3f8cf4"/><path d="M3.500 5.500h6v5h-6zM10 7.500l2.500-2v5L10 8.500z" fill="#fff"/></svg></button>
            <button aria-label="Calculator"><svg class="h-4 w-4" viewBox="0 0 16 16"><path d="M2 0h12v16H2z" fill="#f2f2f2"/><path d="M4 2h8v3H4z" fill="#222"/><path d="M4 8h8M4 10.500h8M4 13h8" stroke="#222" stroke-width="1.3" stroke-dasharray="1.500 1.500"/></svg></button>
            <button aria-label="Camera"><svg class="h-4 w-4" viewBox="0 0 16 16"><path d="M1 4h3l1-2h6l1 2h3v10H1z" fill="#75777b"/><circle cx="8" cy="8.500" r="3.500" fill="#c8d6ea"/><circle cx="8" cy="8.500" r="1.8" fill="#8ba5cc"/></svg></button>
            <button class="bg-[linear-gradient(#f6e98a,#f6e98a)] bg-[length:26px_2px] bg-bottom bg-no-repeat" aria-label="Origin"><svg class="h-4 w-4" viewBox="0 0 16 16"><path d="M8.500 0L8 2.200c4 0 6 3 6 5.800 0 4-3 7-6.500 8l.5-2.200C4 13.800 2 11 2 8c0-4 3-7 6.500-8z" fill="#ea6a2b"/><circle cx="8" cy="8" r="2.200" fill="#1c1c1c"/></svg></button>
            <button class="bg-[linear-gradient(#f6e98a,#f6e98a)] bg-[length:26px_2px] bg-bottom bg-no-repeat" aria-label="Screencast-O-Matic"><svg class="h-4 w-4" viewBox="0 0 16 16"><path d="M0 0h16v16H0z" fill="#080808"/><path d="M2 2v12h13" fill="none" stroke="#ccc" stroke-dasharray="1 1.500"/></svg></button>
        </div>
        <div class="ml-auto flex h-full items-center">
            <svg class="mr-3.5 h-5 w-5" viewBox="0 0 20 20"><circle cx="10" cy="10" r="9" fill="#2ba3d6" stroke="#fff" stroke-width="1.5"/><path d="M7 7.500c0-4 6-4 6-.5 0 2.500-3 2.500-3 5M10 14v2" fill="none" stroke="#fff" stroke-width="2"/><circle cx="16" cy="15" r="4" fill="#e0202a"/><path d="M16 12.500v3M16 16.500v1" stroke="#fff"/></svg>
            <svg class="mr-4 h-3 w-3" viewBox="0 0 12 12"><path d="M1 9l5-5 5 5" fill="none" stroke="#fff" stroke-width="1.3"/></svg>
            <svg class="mr-4 h-4 w-4" viewBox="0 0 16 16" fill="none" stroke="#fff" stroke-width="1.2"><path d="M6 5h8v7H5M15 7v3M3.500 7.500V14M1 2v3c0 3 5 3 5 0V2"/><path d="M8 7h3v3H8z" fill="#fff"/></svg>
            <svg class="mr-1.5 h-3.5 w-3.5" viewBox="0 0 14 14" fill="none" stroke="#ccc" stroke-width="1.2"><path d="M2 13C2 7 7 2 13 2M5 13c0-4 4-8 8-8M8 13c0-3 2-5 5-5"/><circle cx="12" cy="12" r="1.2" fill="#ccc"/></svg>
            <div class="w-[60px] text-center font-[Roboto,sans-serif] text-[11px] leading-[15px]">10:35 PM<br>5/5/2020</div>
            <svg class="ml-3 h-4 w-4" viewBox="0 0 16 16"><path d="M0 1h16v11h-5v3.500L8 12H0z" fill="#fff"/><path d="M3 4.500h10M3 6.500h10M3 8.500h7" stroke="#1c1c1c"/></svg>
            <div class="mr-1 ml-[18px] h-full w-px bg-[#555]"></div>
        </div>
    </div>

    <!-- Click highlight and pointer -->
    <svg class="pointer-events-none absolute top-[442px] left-[536px] h-[72px] w-[72px]" viewBox="0 0 72 72">
        <circle cx="36" cy="36" r="34" fill="none" stroke="#f2f01c" stroke-width="3"/>
        <path d="M36 36v16l4-3.500 2.500 6 2.500-1-2.500-6h5z" fill="#fff" stroke="#111"/>
    </svg>

    <!-- Recorder watermark -->
    <div class="pointer-events-none absolute bottom-3 left-4 font-['Noto_Sans',sans-serif] font-bold text-white [text-shadow:1px_1px_1px_#000,0_0_2px_#000,1px_2px_1px_#333]">
        <div class="text-[12px] leading-[14px]">RECORDED WITH</div>
        <div class="flex h-8 items-center gap-1.5 text-[18px] leading-8">
            SCREENCAST
            <svg class="h-[34px] w-[34px]" viewBox="0 0 34 34"><circle cx="17" cy="17" r="15" fill="none" stroke="#222" stroke-width="4"/><circle cx="17" cy="17" r="15" fill="none" stroke="#4a97d6" stroke-width="2"/><circle cx="17" cy="17" r="5.500" fill="#4f9fe0"/></svg>
            MATIC
        </div>
    </div>
</body>
</html>
